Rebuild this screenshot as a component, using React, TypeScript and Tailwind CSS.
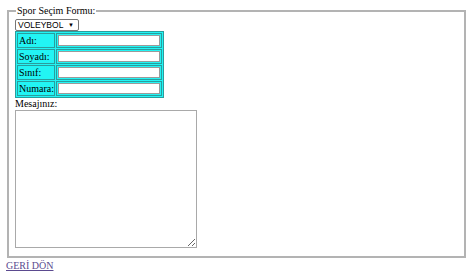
export default function App() {
  const rows = ['Adı:', 'Soyadı:', 'Sınıf:', 'Numara:'];

  return (
    <div className="h-[274px] w-[474px] bg-white pl-[6px] pt-[5px] font-['Liberation_Serif',serif] text-[10px] leading-[12px] text-black">
      <fieldset className="ml-[1px] w-[459px] h-[253px] border-2 border-[#b3b3b3] pl-[6px] pr-[6px] pt-[2px]">
        <legend className="ml-[1px] px-[1px]">Spor Seçim Formu:</legend>

        <div className="flex h-[12px] w-[64px] items-center justify-between rounded-[2px] border border-[#767676] bg-white pl-[2px] pr-[4px] font-['Liberation_Sans',sans-serif] text-[8.5px] leading-[10px]">
          <span>VOLEYBOL</span>
          <span className="text-[6px]">▼</span>
        </div>

        <table className="border-separate border-spacing-[1px] border border-[#2a9d9d] bg-[#22f4f4]">
          <tbody>
            {rows.map((r) => (
              <tr key={r}>
                <td className="h-[15px] w-[37px] border border-[#2a9d9d] p-0 pl-[1px] align-middle leading-[12px]">{r}</td>
                <td className="border border-[#2a9d9d] p-[1px]">
                  <input className="block h-[11px] w-[102px] border border-[#9a9a9a] bg-white" />
                </td>
              </tr>
            ))}
          </tbody>
        </table>

        <div className="h-[12px]">Mesajınız:</div>
        <textarea className="block h-[138px] w-[182px] border border-[#a9a9a9] bg-white" />
      </fieldset>
      <a href="#" className="mt-[2px] inline-block text-[#5b4a8f] underline">GERİ DÖN</a>
    </div>
  );
}
